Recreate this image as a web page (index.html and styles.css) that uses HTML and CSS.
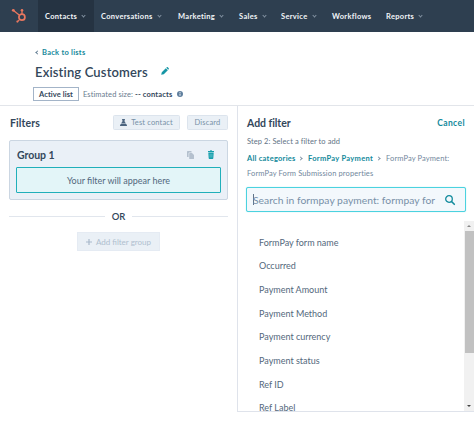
FILE: index.html
```html
<!DOCTYPE html>
<html lang="en">
<head>
<meta charset="utf-8">
<title>Existing Customers</title>
<link rel="stylesheet" href="styles.css">
</head>
<body>
<nav class="nav">
  <div class="logo"><svg width="16" height="16" viewBox="0 0 16 16" fill="none" stroke="#e8775f"><circle cx="10.9" cy="10.2" r="3" stroke-width="1.7"/><path d="M11 7V3.6M8.5 8.2L2.5 3.6M8.7 12.4L6.5 14.6" stroke-width="1.3"/><g fill="#e8775f" stroke="none"><circle cx="11" cy="3.2" r="1.3"/><circle cx="2.3" cy="3.3" r="1.4"/><circle cx="6.4" cy="14.6" r="1.1"/></g></svg></div>
  <a class="item active"><span class="t1">Contacts</span><i class="chev"></i></a>
  <a class="item"><span class="t2">Conversations</span><i class="chev"></i></a>
  <a class="item"><span>Marketing</span><i class="chev"></i></a>
  <a class="item"><span>Sales</span><i class="chev"></i></a>
  <a class="item"><span>Service</span><i class="chev"></i></a>
  <a class="item"><span>Workflows</span></a>
  <a class="item"><span>Reports</span><i class="chev"></i></a>
</nav>
<header class="header">
  <a class="back"><i class="back-arrow"></i><span>Back to lists</span></a>
  <div class="title-row"><h1>Existing Customers</h1><svg class="pencil" width="8" height="8" viewBox="0 0 8 8" fill="#1696a5"><path d="M.2 7.8L.8 5.2 4.8 1.2 6.8 3.2 2.8 7.2ZM5.3.7L6 .1Q6.4-.1 6.8.2L7.8 1.2Q8 1.6 7.8 2L7.2 2.7Z"/></svg></div>
  <div class="meta"><span class="badge">Active list</span><span class="size">Estimated size:</span><b class="count">-- contacts</b><svg width="6" height="6" viewBox="0 0 6 6"><circle cx="3" cy="3" r="3" fill="#5f7f9e"/><path d="M3 2.6V4.8M3 1.1V2" stroke="#fff" stroke-width=".9"/></svg></div>
</header>
<main class="main">
  <section class="left">
    <div class="filters-bar">
      <h2 class="filters">Filters</h2>
      <button class="btn test"><svg width="7" height="7" viewBox="0 0 7 7" fill="#4c6580"><path d="M2 0H5V.8H4.6V2.5L6 4.4H1L2.4 2.5V.8H2ZM.7 5H6.3L7 6.4V7H0V6.4Z"/></svg><span>Test contact</span></button>
      <button class="btn discard"><span>Discard</span></button>
    </div>
    <div class="group">
      <div class="group-head">
        <h2>Group 1</h2>
        <svg class="copy" width="7" height="8" viewBox="0 0 7 8" fill="#b4c0ce"><path d="M0 .7Q0 0 .7 0H4Q4.6 0 4.6.6V1.5H2.3Q1.6 1.5 1.6 2.3V6H.7Q0 6 0 5.4Z"/><path d="M2.2 2.7Q2.2 2 2.8 2H5L7 4V7.4Q7 8 6.4 8H2.8Q2.2 8 2.2 7.4Z"/></svg>
        <svg width="6" height="9" viewBox="0 0 6 9"><path d="M0 1H2L2.3.3H3.7L4 1H6V2H0ZM.3 2.6H5.7L5.3 8.3Q5.2 9 4.6 9H1.4Q.8 9 .7 8.3Z" fill="#159eab"/><path d="M2.1 3.8V7.5M3.9 3.8V7.5" stroke="#8fd2db" stroke-width=".6"/></svg>
      </div>
      <div class="placeholder"><span>Your filter will appear here</span></div>
    </div>
    <div class="or"><span>OR</span></div>
    <button class="add"><svg width="6" height="6" viewBox="0 0 6 6"><path d="M3 0V6M0 3H6" stroke="#a9b9cb" stroke-width="1.2"/></svg><span>Add filter group</span></button>
  </section>
  <section class="right">
    <div class="right-head"><h2 class="add-title">Add filter</h2><a class="cancel">Cancel</a></div>
    <p class="step">Step 2: Select a filter to add</p>
    <div class="crumbs"><a class="c1">All categories</a><i class="sep"></i><a class="c2">FormPay Payment</a><i class="sep"></i><span class="c3">FormPay Payment:</span></div>
    <div class="crumbs second"><span class="c4">FormPay Form Submission properties</span></div>
    <div class="search"><i class="caret"></i><span>Search in formpay payment: formpay for</span><svg width="10" height="10" viewBox="0 0 10 10" fill="none" stroke="#128b9d"><circle cx="4" cy="4" r="3.3" stroke-width="1.3"/><path d="M6.5 6.5L9.3 9.3" stroke-width="1.6" stroke-linecap="round"/></svg></div>
    <div class="results">
      <ul class="list">
        <li>FormPay form name</li><li>Occurred</li><li>Payment Amount</li><li>Payment Method</li><li>Payment currency</li><li>Payment status</li><li>Ref ID</li><li>Ref Label</li>
      </ul>
      <div class="scroll"><i class="up"></i><div class="thumb"></div><i class="down"></i></div>
    </div>
  </section>
</main>
</body>
</html>
```
FILE: styles.css
```css
* { box-sizing: border-box; margin: 0; padding: 0; }
body { width: 474px; height: 438px; overflow: hidden; background: #fff; color: #33475b; font-family: Lato, "Open Sans", sans-serif; font-size: 8px; }
span, b, a, h1, h2, p, li { white-space: nowrap; }
svg { display: block; flex: none; overflow: visible; }
.nav { height: 32px; background: #2e3f50; display: grid; grid-template-columns: 38px 56px 77px 61px 42px 51px 54px 50px; }
.logo { padding: 7px 0 0 11px; }
.item { display: flex; align-items: center; gap: 5px; padding-left: 7px; color: #f2f5f8; font-size: 7.5px; font-weight: 700; letter-spacing: .31px; }
.active { background: #253342; }
.chev { width: 3px; height: 3px; border: solid #8291a1; border-width: 0 1px 1px 0; transform: translateY(-1px) rotate(45deg); }
.header { height: 74px; border-bottom: 1px solid #e2e5ea; padding: 14px 0 0 33px; }
.back { display: flex; align-items: center; height: 12px; padding-left: 3px; gap: 3px; color: #16899b; font-size: 7.5px; font-weight: 700; letter-spacing: .25px; }
.back-arrow { width: 3px; height: 3px; border: solid #607b91; border-width: 0 0 1px 1px; transform: rotate(45deg); }
.title-row { display: flex; align-items: center; height: 20px; margin: 4px 0 5px; padding-left: 2px; }
h1 { font-size: 13px; font-weight: 600; letter-spacing: .15px; width: 126px; }
.pencil { margin-top: -2px; }
.meta { display: flex; align-items: center; height: 14px; }
.badge { width: 46px; height: 14px; border: 1px solid #a3b4c8; text-align: center; line-height: 13px; font-size: 7.5px; font-weight: 700; letter-spacing: .1px; }
.size { width: 52px; margin-left: 4px; color: #687b8e; font-size: 7.5px; letter-spacing: .08px; }
.count { font-size: 7.5px; width: 42px; letter-spacing: .15px; }
.main { display: grid; grid-template-columns: 237px 237px; height: 306px; }
.left { padding: 9px 9px 0; }
.filters-bar { display: flex; height: 15px; align-items: center; }
h2 { font-size: 10.5px; font-weight: 700; letter-spacing: .1px; }
.filters { width: 104px; padding-left: 1px; }
.btn { display: flex; align-items: center; justify-content: center; height: 15px; gap: 4px; border: 1px solid #dce4ed; border-radius: 1.5px; background: #eaf0f6; font: 7.5px Lato, sans-serif; color: #7890a7; letter-spacing: .15px; }
.test { width: 67px; }
.discard { width: 41px; margin-left: 7px; }
.group { margin-top: 10px; height: 60px; border: 1px solid #cbd6e2; border-radius: 2px; background: #eaf0f7; padding: 6px 6px; }
.group-head { display: flex; align-items: center; height: 15px; }
.group-head h2 { width: 171px; padding-left: 1px; letter-spacing: -.05px; }
.copy { margin-right: 14px; }
.placeholder { height: 26px; margin-top: 5px; border: 1px solid #20afba; border-radius: 1px; background: #e3f5f8; text-align: center; line-height: 25px; font-size: 9px; color: #52687d; }
.or { display: flex; align-items: center; gap: 7px; height: 14px; margin-top: 9px; font-size: 9.5px; font-weight: 600; }
.or::before, .or::after { content: ""; flex: 1; height: 1px; background: #e1e6ed; }
.add { display: flex; align-items: center; justify-content: center; gap: 4px; width: 83px; height: 19px; margin: 9px auto 0; border: 1px solid #e5ebf3; background: #eaf0f6; color: #afbfcf; font: 8px Lato, sans-serif; letter-spacing: 0; }
.right { display: flex; flex-direction: column; border-left: 1px solid #dfe3eb; border-bottom: 1px solid #dfe3eb; }
.right-head { display: flex; justify-content: space-between; height: 14px; align-items: center; margin: 10px 9px 0; }
.add-title { letter-spacing: -.05px; }
.cancel { color: #12899b; font-size: 8.5px; font-weight: 700; letter-spacing: .4px; }
.step { margin: 6px 9px 0; height: 12px; line-height: 12px; color: #627386; font-size: 7.5px; letter-spacing: .08px; }
.crumbs { display: flex; align-items: center; height: 15px; margin: 3px 9px 0; font-size: 7.5px; color: #72879d; }
.crumbs a { color: #12899b; font-weight: 700; }
.second { margin-top: 0; letter-spacing: .12px; }
.sep { width: 3px; height: 3px; margin: 0 6px 0 2px; border: solid #8193a7; border-width: 1px 1px 0 0; transform: rotate(45deg); }
.crumbs .c1 { width: 50px; letter-spacing: .25px; }
.crumbs .c2 { width: 67px; letter-spacing: .31px; }
.c3 { letter-spacing: .12px; }
.search { display: flex; align-items: center; height: 25px; flex: none; margin: 6px 8px 0; padding-left: 6px; border: 1px solid #4bd2df; border-radius: 2px; background: #f3f8fc; font-size: 10.3px; color: #7890a8; box-shadow: 0 0 1px #7ce2ea; }
.search span { width: 192px; letter-spacing: .02px; }
.caret { width: 1px; height: 11px; background: #60758a; margin-right: -1px; }
.results { display: flex; height: 190px; margin-top: 9px; }
.list { flex: 1; height: 190px; overflow: hidden; list-style: none; padding: 9.5px 0 0 21px; }
.list li { height: 23.7px; line-height: 23.7px; font-size: 9px; color: #53687c; }
.scroll { width: 10px; height: 190px; background: #f1f1f1; display: flex; flex-direction: column; align-items: center; }
.thumb { width: 9px; height: 122px; background: #c1c1c1; margin-top: 4px; }
.up { margin-top: 4px; border: 2px solid transparent; border-top: 0; border-bottom: 2px solid #888; }
.down { margin-top: 52px; border: 2px solid transparent; border-bottom: 0; border-top: 2px solid #444; }
```
